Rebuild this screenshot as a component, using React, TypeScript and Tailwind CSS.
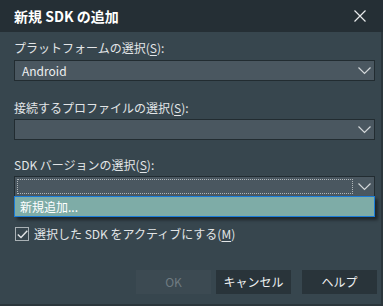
import React from 'react';

const font = { fontFamily: '"Noto Sans CJK JP", "Noto Sans", sans-serif' };

const Chevron: React.FC = () => (
  <svg width="13" height="8" viewBox="0 0 13 8" className="text-[#d3d7d9]">
    <path d="M0.5 0.5 L6.5 6.5 L12.5 0.5" fill="none" stroke="currentColor" strokeWidth="1.2" />
  </svg>
);

const Label: React.FC<{ text: string; mnemonic: string }> = ({ text, mnemonic }) => (
  <div className="h-[16px] text-[12px] leading-[16px] text-[#e2e5e7]">
    {text}(<span className="underline underline-offset-2">{mnemonic}</span>):
  </div>
);

const Select: React.FC<{ value?: string; focused?: boolean }> = ({ value, focused }) => (
  <div className="flex h-[21px] items-center border border-[#222c31] bg-[#4a5760] pl-[7px] pr-[3px]">
    <div
      className={
        focused
          ? 'mr-[5px] -ml-[5px] h-[15px] flex-1 border border-dotted border-[#b0b6b9]'
          : 'flex-1 text-[12px] leading-[16px] text-[#eef0f1]'
      }
    >
      {value}
    </div>
    <Chevron />
  </div>
);

export default function App() {
  return (
    <div style={font} className="flex h-[306px] w-[383px] flex-col overflow-hidden bg-[#37464e]">
      <div className="flex h-[32px] shrink-0 items-center justify-between bg-[#252f35] pl-[14px] pr-[17px]">
        <span className="text-[14px] font-bold text-white">新規 SDK の追加</span>
        <svg width="12" height="12" viewBox="0 0 12 12">
          <path d="M0.5 0.5 L11.5 11.5 M11.5 0.5 L0.5 11.5" stroke="#e8eaeb" strokeWidth="1.2" />
        </svg>
      </div>

      <div className="relative flex flex-1 flex-col border-r-2 border-b-2 border-[#2b363c] pl-[14px] pr-[6px] pt-[8px]">
        <Label text="プラットフォームの選択" mnemonic="S" />
        <div className="mt-[4px]">
          <Select value="Android" />
        </div>

        <div className="mt-[19px]">
          <Label text="接続するプロファイルの選択" mnemonic="S" />
        </div>
        <div className="mt-[3px]">
          <Select />
        </div>

        <div className="mt-[17px]">
          <Label text="SDK バージョンの選択" mnemonic="S" />
        </div>
        <div className="relative mt-[3px]">
          <Select focused />
          <div className="absolute left-0 right-0 top-[20px] z-10 h-[21px] border border-[#1a7bd8] bg-[#7eaca7] pl-[5px] text-[12px] leading-[19px] text-white shadow-[3px_3px_3px_rgba(0,0,0,0.45)]">
            新規追加...
          </div>
        </div>

        <div className="mt-[29px] flex items-center gap-[5px] pl-[1px]">
          <div className="flex h-[14px] w-[14px] items-center justify-center border border-[#a9b1b5] bg-[#37464e]">
            <svg width="11" height="9" viewBox="0 0 11 9">
              <path d="M0.8 4.5 L4 7.6 L10.3 0.8" fill="none" stroke="#e2e5e7" strokeWidth="1.4" />
            </svg>
          </div>
          <span className="text-[12px] leading-[16px] text-[#e2e5e7]">
            選択した SDK をアクティブにする(<span className="underline underline-offset-2">M</span>)
          </span>
        </div>

        <div className="-mr-[2px] mt-[28px] flex justify-end gap-[5px]">
          <div className="flex h-[24px] w-[75px] items-center justify-center bg-[#3c4a52] text-[12px] text-[#6f7b81]">
            OK
          </div>
          <div className="mr-[6px] flex h-[24px] w-[75px] items-center justify-center bg-[#29343a] text-[12px] text-[#eef0f1]">
            キャンセル
          </div>
          <div className="flex h-[24px] w-[75px] items-center justify-center bg-[#29343a] text-[12px] text-[#eef0f1]">
            ヘルプ
          </div>
        </div>
      </div>
    </div>
  );
}
